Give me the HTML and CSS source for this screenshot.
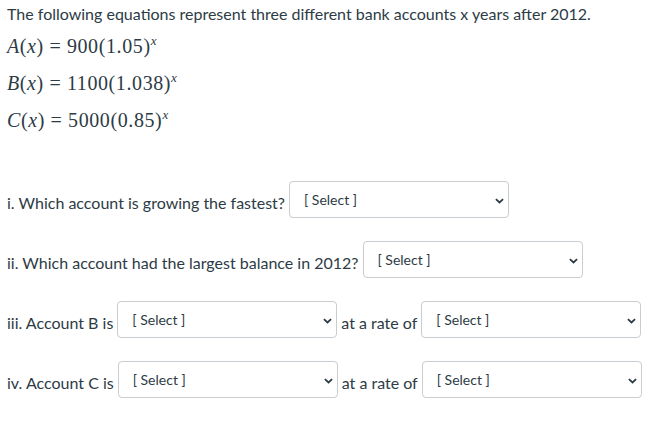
FILE: index.html
```html
<!DOCTYPE html>
<html>
<head>
<meta charset="utf-8">
<link rel="stylesheet" href="styles.css">
</head>
<body>
<div class="page">
  <p class="intro">The following equations represent three different bank accounts x years after 2012.</p>
  <p class="eq eq1"><i>A</i>(<i>x</i>) = 900(1.05)<sup><i>x</i></sup></p>
  <p class="eq"><i>B</i>(<i>x</i>) = 1100(1.038)<sup><i>x</i></sup></p>
  <p class="eq"><i>C</i>(<i>x</i>) = 5000(0.85)<sup><i>x</i></sup></p>

  <div class="row row1">
    <span class="label">i. Which account is growing the fastest?</span>
    <div class="select"><span>[ Select ]</span><svg class="chev" viewBox="0 0 10 6" width="9" height="6"><path d="M1 1 L5 4.6 L9 1" fill="none" stroke="#2d3b45" stroke-width="2"/></svg></div>
  </div>
  <div class="row">
    <span class="label">ii. Which account had the largest balance in 2012?</span>
    <div class="select"><span>[ Select ]</span><svg class="chev" viewBox="0 0 10 6" width="9" height="6"><path d="M1 1 L5 4.6 L9 1" fill="none" stroke="#2d3b45" stroke-width="2"/></svg></div>
  </div>
  <div class="row">
    <span class="label">iii. Account B is</span>
    <div class="select"><span>[ Select ]</span><svg class="chev" viewBox="0 0 10 6" width="9" height="6"><path d="M1 1 L5 4.6 L9 1" fill="none" stroke="#2d3b45" stroke-width="2"/></svg></div>
    <span class="label">at a rate of</span>
    <div class="select"><span>[ Select ]</span><svg class="chev" viewBox="0 0 10 6" width="9" height="6"><path d="M1 1 L5 4.6 L9 1" fill="none" stroke="#2d3b45" stroke-width="2"/></svg></div>
  </div>
  <div class="row">
    <span class="label">iv. Account C is</span>
    <div class="select"><span>[ Select ]</span><svg class="chev" viewBox="0 0 10 6" width="9" height="6"><path d="M1 1 L5 4.6 L9 1" fill="none" stroke="#2d3b45" stroke-width="2"/></svg></div>
    <span class="label">at a rate of</span>
    <div class="select"><span>[ Select ]</span><svg class="chev" viewBox="0 0 10 6" width="9" height="6"><path d="M1 1 L5 4.6 L9 1" fill="none" stroke="#2d3b45" stroke-width="2"/></svg></div>
  </div>
</div>
</body>
</html>
```
FILE: styles.css
```css
html, body { margin: 0; padding: 0; background: #fff; }
.page {
  padding: 4px 7px 0 7px;
  font-family: Lato, "Liberation Sans", sans-serif;
  font-size: 16px;
  color: #2d3b45;
}
.intro { margin: 0; line-height: 20px; }
.eq {
  margin: 0;
  font-family: "Liberation Serif", "DejaVu Serif", serif;
  font-size: 20px;
  letter-spacing: 0.6px;
  line-height: 37px;
  height: 37px;
}
.eq1 { margin-top: 4px; }
.eq sup { font-size: 13px; vertical-align: 8px; line-height: 0; }
.row1 { margin-top: 42px; }
.row {
  display: flex;
  align-items: center;
  gap: 4px;
  margin-bottom: 23px;
}
.label { padding-top: 6px; white-space: nowrap; }
.select {
  box-sizing: border-box;
  width: 220px;
  height: 37px;
  border: 1px solid #c7cdd1;
  border-radius: 4px;
  display: flex;
  align-items: center;
  justify-content: space-between;
  padding: 0 4px 0 14px;
  font-size: 14px;
}
.select span { margin-top: 0; }
.chev { margin-top: 2px; }
```
